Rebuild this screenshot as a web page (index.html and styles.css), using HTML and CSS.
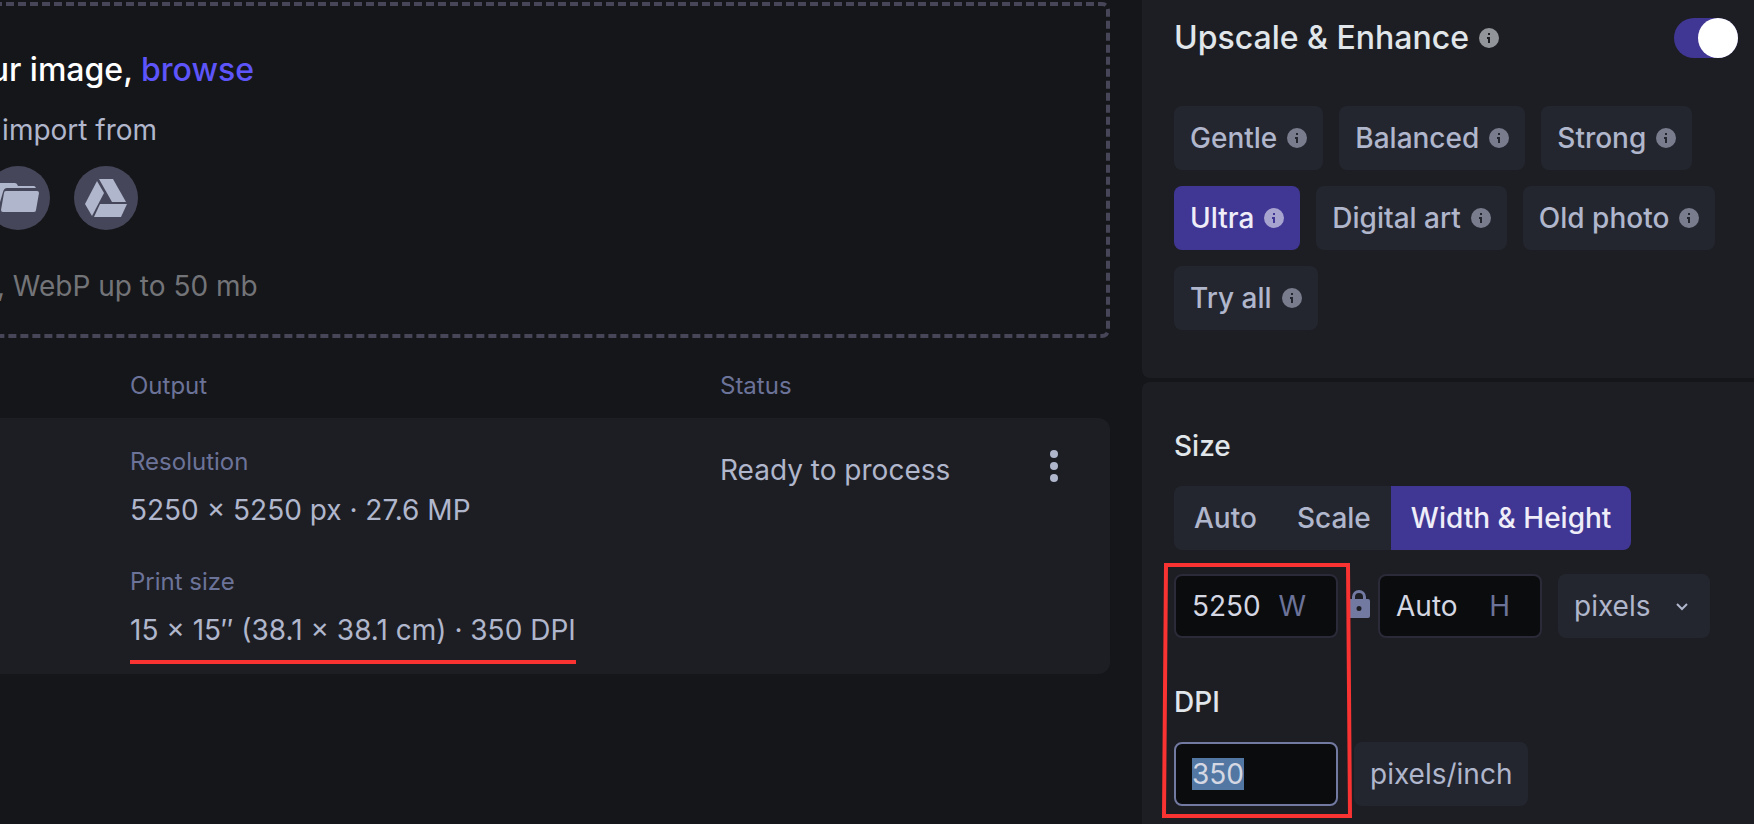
FILE: index.html
```html
<!DOCTYPE html>
<html lang="en">
<head>
  <meta charset="UTF-8" />
  <meta name="viewport" content="width=device-width, initial-scale=1.0"/>
  <title>Image Upscaler</title>
  <link rel="stylesheet" href="styles.css">
</head>
<body>
  <svg class="sprite" aria-hidden="true">
    <symbol id="info" viewBox="0 0 20 20">
      <path fill-rule="evenodd" d="M10 0a10 10 0 1 0 0 20a10 10 0 0 0 0-20zM9 5h2v2H9zM8 9h3v6H9v-4H8z"/>
    </symbol>
  </svg>

  <div class="app">
    <main class="workspace">
      <section class="dropzone">
        <p class="drop-title">Drop your image, <a href="#">browse</a></p>
        <p class="drop-import">or import from</p>
        <div class="sources">
          <button class="source" aria-label="Folder">
            <svg width="44" height="44" viewBox="0 0 44 44">
              <path d="M2 33V10q0-3 3-3h14q2 0 3 3h16q1 0 2 2H11q-3 0-4 4z"/>
              <path d="M10 15h31q2 0 2 2l-3 17q0 2-2 2H7q-2 0-2-2l3-17q0-2 2-2z"/>
            </svg>
          </button>
          <button class="source" aria-label="Google Drive">
            <svg width="44" height="40" viewBox="0 0 44 40">
              <path d="M15 1h14l13 23H28z"/>
              <path d="M13 3l7 12L8 38L1 26z"/>
              <path d="M16 26h27l-6 13H10z"/>
            </svg>
          </button>
        </div>
        <p class="drop-hint">PNG, JPG, WebP up to 50 mb</p>
      </section>

      <table class="files">
        <thead>
          <tr>
            <th class="col-source"></th>
            <th class="col-output">Output</th>
            <th class="col-status">Status</th>
            <th class="col-menu"></th>
          </tr>
        </thead>
        <tbody>
          <tr>
            <td></td>
            <td>
              <dl class="output">
                <dt>Resolution</dt>
                <dd>5250 × 5250 px · 27.6 MP</dd>
                <dt>Print size</dt>
                <dd><span class="marked">15 × 15″ (38.1 × 38.1 cm) · 350 DPI</span></dd>
              </dl>
            </td>
            <td class="status">Ready to process</td>
            <td class="menu">
              <button class="kebab" aria-label="More">
                <svg width="8" height="32" viewBox="0 0 8 32">
                  <circle cx="4" cy="4" r="4"/>
                  <circle cx="4" cy="16" r="4"/>
                  <circle cx="4" cy="28" r="4"/>
                </svg>
              </button>
            </td>
          </tr>
        </tbody>
      </table>
    </main>

    <aside class="settings">
      <section class="panel">
        <div class="panel-head">
          <h2>Upscale &amp; Enhance <svg class="info"><use href="#info"/></svg></h2>
          <input class="toggle" type="checkbox" aria-label="Upscale &amp; Enhance" checked>
        </div>
        <div class="modes">
          <button class="btn">Gentle <svg class="info"><use href="#info"/></svg></button>
          <button class="btn">Balanced <svg class="info"><use href="#info"/></svg></button>
          <button class="btn">Strong <svg class="info"><use href="#info"/></svg></button>
          <button class="btn active">Ultra <svg class="info"><use href="#info"/></svg></button>
          <button class="btn">Digital art <svg class="info"><use href="#info"/></svg></button>
          <button class="btn">Old photo <svg class="info"><use href="#info"/></svg></button>
          <button class="btn">Try all <svg class="info"><use href="#info"/></svg></button>
        </div>
      </section>

      <section class="panel panel-size">
        <h3>Size</h3>
        <div class="tabs">
          <button class="tab">Auto</button>
          <button class="tab">Scale</button>
          <button class="tab active">Width &amp; Height</button>
        </div>
        <div class="fields">
          <div class="row">
            <div class="field">
              <input id="width" type="text" value="5250">
              <label for="width">W</label>
            </div>
            <svg class="lock" width="22" height="28" viewBox="0 0 22 28">
              <path fill-rule="evenodd" d="M4 9V7a7 7 0 0 1 14 0v2h2q2 0 2 2v15q0 2-2 2H2q-2 0-2-2V11q0-2 2-2zM7 9h8V7a4 4 0 0 0-8 0zM11 16a2.500 2.500 0 1 0 0 5a2.500 2.500 0 0 0 0-5z"/>
            </svg>
            <div class="field">
              <input id="height" type="text" value="Auto">
              <label for="height">H</label>
            </div>
            <div class="select">
              <select aria-label="Units">
                <option>pixels</option>
              </select>
              <svg class="chevron" width="14" height="10" viewBox="0 0 14 10"><path d="M2 2l5 5l5-5"/></svg>
            </div>
          </div>
          <label class="dpi-label" for="dpi">DPI</label>
          <div class="row">
            <div class="field">
              <input id="dpi" type="text" value="350">
            </div>
            <button class="btn unit">pixels/inch</button>
          </div>
          <svg class="marker" width="190" height="258" viewBox="0 0 190 258" aria-hidden="true">
            <path d="M4 3H186L188 254H2z"/>
          </svg>
        </div>
      </section>
    </aside>
  </div>

  <script>
    document.getElementById('dpi').focus();
    document.getElementById('dpi').select();
  </script>
</body>
</html>
```
FILE: styles.css
```css
* {
  box-sizing: border-box;
}
body {
  margin: 0;
  background-color: #15161a;
  color: #b0b6cc;
  font-family: Inter, sans-serif;
  font-size: 28px;
  line-height: 32px;
}
h2, h3, p, dl, dd {
  margin: 0;
}
button, input, select {
  font: inherit;
  color: inherit;
  border: 0;
  margin: 0;
}
svg {
  display: block;
  flex-shrink: 0;
  fill: currentColor;
}
.sprite {
  position: absolute;
  width: 0;
  height: 0;
}
.app {
  display: grid;
  grid-template-columns: minmax(0, 1fr) 612px;
  min-height: 100vh;
  overflow: hidden;
}

/* workspace runs past the left edge of the window */
.workspace {
  margin-left: -986px;
  padding: 2px 32px 0 0;
}
.dropzone {
  display: flex;
  flex-direction: column;
  align-items: center;
  padding: 44px 0 32px;
  border: 4px dashed #464658;
  border-radius: 8px;
}
.drop-title {
  margin-bottom: 24px;
  color: #ffffff;
  font-size: 32px;
  font-weight: 500;
  line-height: 40px;
}
.drop-title a {
  color: #5d55fa;
  text-decoration: none;
}
.sources {
  display: flex;
  gap: 24px;
  margin: 20px 0 40px;
}
.source {
  display: flex;
  align-items: center;
  justify-content: center;
  width: 64px;
  height: 64px;
  padding: 0;
  border-radius: 50%;
  background: #46465a;
  color: #b0b6cc;
}
.drop-hint {
  color: #737478;
}

.files {
  width: 100%;
  margin-top: 32px;
  border-spacing: 0;
  table-layout: fixed;
}
.files th {
  padding: 0 0 16px;
  color: #6c7399;
  font-size: 24px;
  font-weight: 400;
  text-align: left;
}
.files td {
  padding: 28px 0;
  background: #1d1e23;
  vertical-align: top;
}
.files td:last-child {
  border-radius: 0 12px 12px 0;
}
.col-source {
  width: 1116px;
}
.col-output {
  width: 590px;
}
.col-menu {
  width: 72px;
}
.output dt {
  margin-bottom: 16px;
  color: #6c7399;
  font-size: 24px;
}
.output dd + dt {
  margin-top: 40px;
}
.marked {
  position: relative;
}
.marked::after {
  content: "";
  position: absolute;
  left: 0;
  right: 0;
  bottom: -17px;
  height: 4px;
  background: #f93232;
}
.files .status {
  padding-top: 36px;
}
.files .menu {
  padding-top: 32px;
}
.kebab {
  padding: 0 12px;
  background: none;
}

.settings {
  display: flex;
  flex-direction: column;
  gap: 4px;
}
.panel {
  padding: 18px 16px 48px 32px;
  border-radius: 0 0 0 8px;
  background: #1d1e23;
}
.panel-size {
  flex: 1;
  padding: 48px 16px 18px 32px;
  border-radius: 8px 0 0 0;
}
.panel-head {
  display: flex;
  justify-content: space-between;
  align-items: center;
  margin-bottom: 48px;
}
h2 {
  display: flex;
  align-items: center;
  gap: 10px;
  color: #e0e6ea;
  font-size: 32px;
  font-weight: 500;
  line-height: 40px;
}
h3, .dpi-label {
  display: block;
  color: #e0e6ea;
  font-size: 28px;
  font-weight: 500;
}
.info {
  width: 20px;
  height: 20px;
  opacity: 0.6;
}
.toggle {
  appearance: none;
  display: flex;
  justify-content: flex-end;
  width: 64px;
  height: 40px;
  border-radius: 20px;
  background: #403694;
}
.toggle::before {
  content: "";
  width: 40px;
  height: 40px;
  border-radius: 50%;
  background: #ffffff;
}
.modes {
  display: flex;
  flex-wrap: wrap;
  gap: 16px;
}
.btn {
  display: flex;
  align-items: center;
  gap: 10px;
  height: 64px;
  padding: 0 16px;
  border-radius: 8px;
  background: #24262f;
  font-weight: 500;
}
.btn.unit {
  font-weight: 400;
}
.tabs {
  display: flex;
  margin: 24px 0;
}
.tab {
  height: 64px;
  padding: 0 20px;
  background: #24262f;
  font-weight: 500;
}
.tab:first-child {
  border-radius: 8px 0 0 8px;
}
.tab:last-child {
  border-radius: 0 8px 8px 0;
}
.btn.active, .tab.active {
  background: #403694;
  color: #eeedf8;
}

.fields {
  position: relative;
}
.row {
  display: flex;
  align-items: center;
}
.field {
  display: flex;
  align-items: center;
  width: 164px;
  height: 64px;
  margin-right: 16px;
  padding: 0 30px 0 16px;
  border: 2px solid #2a2a38;
  border-radius: 8px;
  background: #0b0c0e;
}
.field:focus-within {
  border-color: #727aa2;
}
.field input {
  flex: 1;
  min-width: 0;
  padding: 0;
  background: none;
  color: #d5d8e2;
  outline: none;
}
.field input::selection {
  background: #5277a2;
  color: #d5d8e2;
}
.field label {
  width: 32px;
  color: #6c7399;
  text-align: right;
}
.lock {
  margin: 0 8px 4px -6px;
  color: #727aa2;
}
.select {
  position: relative;
}
.select select {
  appearance: none;
  width: 152px;
  height: 64px;
  padding: 0 16px;
  border-radius: 8px;
  background: #24262f;
}
.chevron {
  position: absolute;
  right: 21px;
  top: 28px;
  fill: none;
  stroke: currentColor;
  stroke-width: 2;
}
.dpi-label {
  margin: 48px 0 24px;
}
.marker {
  position: absolute;
  left: -12px;
  top: -12px;
  fill: none;
  stroke: #f93232;
  stroke-width: 4;
  pointer-events: none;
}
```
